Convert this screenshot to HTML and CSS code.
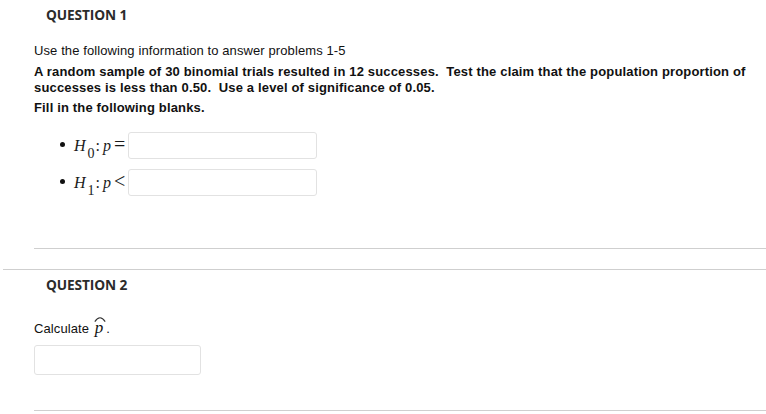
FILE: index.html
```html
<!DOCTYPE html>
<html>
<head>
<meta charset="utf-8">
<link rel="stylesheet" href="styles.css">
</head>
<body>
<section class="question q1">
  <h2 class="q-title">QUESTION 1</h2>
  <div class="q-body">
    <p class="intro">Use the following information to answer problems 1-5</p>
    <p class="strong">A random sample of 30 binomial trials resulted in 12 successes.&nbsp; Test the claim that the population proportion of<br>successes is less than 0.50.&nbsp; Use a level of significance of 0.05.</p>
    <p class="strong fill">Fill in the following blanks.</p>
    <ul class="blanks">
      <li class="blank">
        <span class="dot"></span>
        <span class="math"><i class="var">H</i><span class="sub">0</span><span class="op">:</span><i class="var p">p</i><span class="rel">=</span></span>
        <span class="field field-sm"></span>
      </li>
      <li class="blank">
        <span class="dot"></span>
        <span class="math"><i class="var">H</i><span class="sub">1</span><span class="op">:</span><i class="var p">p</i><span class="rel">&lt;</span></span>
        <span class="field field-sm"></span>
      </li>
    </ul>
    <div class="rule inner"></div>
  </div>
</section>
<div class="rule outer"></div>
<section class="question q2">
  <h2 class="q-title">QUESTION 2</h2>
  <div class="q-body">
    <p class="intro calc">Calculate <span class="hat"><i class="var">p</i><svg class="hat-mark" width="12" height="6" viewBox="0 0 12 6"><path d="M0.8 5.6 Q6 -2.2 11.2 5.6" fill="none" stroke="#333" stroke-width="1.1"/></svg></span>.</p>
    <span class="field field-lg"></span>
    <div class="rule inner last"></div>
  </div>
</section>
</body>
</html>
```
FILE: styles.css
```css
html, body {
  margin: 0;
  padding: 0;
  background: #ffffff;
}
body {
  font-family: "Liberation Sans", Arial, sans-serif;
  font-size: 13px;
  color: #111111;
  width: 766px;
  overflow: hidden;
  letter-spacing: 0.1px;
}
.question {
  display: flex;
  flex-direction: column;
}
.q-title {
  margin: 5px 0 0 46px;
  font-family: "Open Sans", sans-serif;
  font-weight: 700;
  font-size: 13.7px;
  line-height: 19px;
  color: #2b2b2b;
  letter-spacing: -0.1px;
}
.q2 .q-title {
  margin-top: 5px;
}
.q-body {
  padding-left: 34px;
  display: flex;
  flex-direction: column;
  align-items: flex-start;
}
p {
  margin: 0;
  line-height: 16px;
}
.intro {
  margin-top: 19px;
}
.strong {
  font-weight: 700;
  margin-top: 5px;
  letter-spacing: 0.16px;
}
.fill {
  margin-top: 4px;
}
.blanks {
  list-style: none;
  margin: 16px 0 0 0;
  padding: 0;
  display: flex;
  flex-direction: column;
  gap: 10px;
}
.blank {
  display: flex;
  align-items: center;
  height: 27px;
}
.dot {
  width: 5px;
  height: 5px;
  border-radius: 50%;
  background: #111;
  margin-left: 26px;
  margin-right: 9px;
  position: relative;
  top: -1px;
}
.math {
  font-family: "Liberation Serif", "Times New Roman", serif;
  font-size: 16px;
  color: #1a1a1a;
  display: flex;
  align-items: baseline;
  width: 54px;
  letter-spacing: 0;
}
.var {
  font-style: italic;
}
.sub {
  font-size: 14px;
  position: relative;
  top: 7px;
  margin-left: 2px;
}
.op {
  margin: 0 3px 0 1px;
}
.rel {
  margin-left: 3px;
  font-size: 20px;
  line-height: 16px;
}
.field {
  display: block;
  box-sizing: border-box;
  border: 1px solid #e2e2e2;
  border-radius: 3px;
  background: #fff;
}
.field-sm {
  width: 189px;
  height: 27px;
}
.field-lg {
  width: 167px;
  height: 30px;
  margin-top: 9px;
}
.rule {
  height: 1px;
  background: #cfcfcf;
  align-self: stretch;
}
.inner {
  margin-top: 52px;
}
.outer {
  margin: 20px 0 0 3px;
}
.calc {
  margin-top: 26px;
  height: 16px;
}
.hat {
  position: relative;
  display: inline-block;
  font-family: "Liberation Serif", "Times New Roman", serif;
  font-size: 17px;
  line-height: 16px;
  margin: 0 3px 0 2px;
  letter-spacing: 0;
}
.hat-mark {
  position: absolute;
  left: -1px;
  top: -4px;
}
.last {
  margin-top: 35px;
}
```
